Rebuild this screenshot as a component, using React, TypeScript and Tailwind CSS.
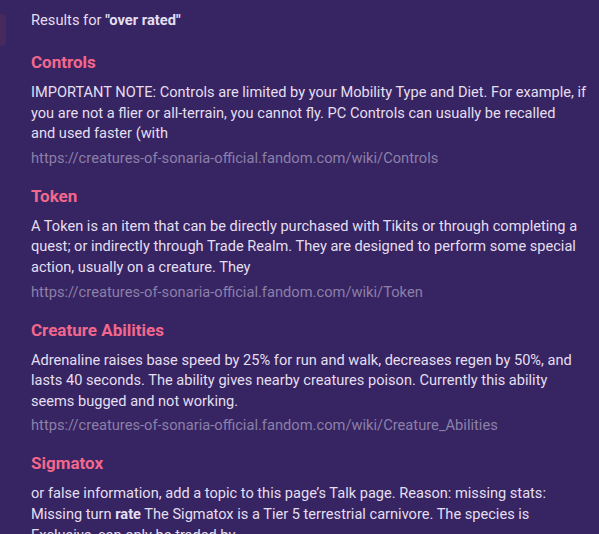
import React from "react";

type Result = {
  title: string;
  lines: React.ReactNode[];
  url: string;
};

const results: Result[] = [
  {
    title: "Controls",
    lines: [
      "IMPORTANT NOTE: Controls are limited by your Mobility Type and Diet. For example, if",
      "you are not a flier or all-terrain, you cannot fly. PC Controls can usually be recalled",
      "and used faster (with",
    ],
    url: "https://creatures-of-sonaria-official.fandom.com/wiki/Controls",
  },
  {
    title: "Token",
    lines: [
      "A Token is an item that can be directly purchased with Tikits or through completing a",
      "quest; or indirectly through Trade Realm. They are designed to perform some special",
      "action, usually on a creature. They",
    ],
    url: "https://creatures-of-sonaria-official.fandom.com/wiki/Token",
  },
  {
    title: "Creature Abilities",
    lines: [
      "Adrenaline raises base speed by 25% for run and walk, decreases regen by 50%, and",
      "lasts 40 seconds. The ability gives nearby creatures poison. Currently this ability",
      "seems bugged and not working.",
    ],
    url: "https://creatures-of-sonaria-official.fandom.com/wiki/Creature_Abilities",
  },
  {
    title: "Sigmatox",
    lines: [
      "or false information, add a topic to this page’s Talk page. Reason: missing stats:",
      <>
        Missing turn <b className="font-bold">rate</b> The Sigmatox is a Tier 5 terrestrial carnivore. The species is
      </>,
      "Exclusive, can only be traded by",
    ],
    url: "https://creatures-of-sonaria-official.fandom.com/wiki/Sigmatox",
  },
];

export default function App() {
  return (
    <div
      className="relative h-[534px] w-[599px] overflow-hidden bg-[#372462] text-[#e4dff0]"
      style={{ fontFamily: "Roboto, 'Liberation Sans', sans-serif" }}
    >
      {/* side tab peeking from the left */}
      <div className="absolute left-0 top-[14px] h-[32px] w-[6px] rounded-r-[4px] bg-[#45295f]" />

      <div className="pl-[31px] pt-[10px]">
        <div className="text-[14.7px] leading-[20px]">
          Results for <b className="font-bold">"over rated"</b>
        </div>

        {results.map((r, i) => (
          <div key={i} className={i === 0 ? "mt-[21px]" : "mt-[17px]"}>
            <div className="text-[17px] font-bold leading-[22px] text-[#f2688c]">{r.title}</div>
            <div className="mt-[9px] text-[14.6px] leading-[20.6px]">
              {r.lines.map((l, j) => (
                <div key={j} className="whitespace-nowrap">
                  {l}
                </div>
              ))}
            </div>
            <div className="mt-[4px] text-[14.7px] leading-[20px] text-[#8b80a8]">{r.url}</div>
          </div>
        ))}
      </div>
    </div>
  );
}
